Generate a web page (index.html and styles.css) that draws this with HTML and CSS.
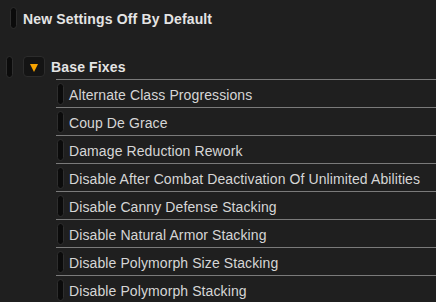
FILE: index.html
```html
<!DOCTYPE html>
<html>
<head>
<meta charset="utf-8">
<link rel="stylesheet" href="styles.css">
</head>
<body>
<div class="panel">
  <div class="header">
    <span class="pill"></span>
    <span class="title">New Settings Off By Default</span>
  </div>
  <div class="group">
    <div class="group-head">
      <span class="pill"></span>
      <span class="toggle"><svg width="8" height="8" viewBox="0 0 8 8"><polygon points="0,0 8,0 4,8" fill="#f7a300"/></svg></span>
      <span class="group-title">Base Fixes</span>
    </div>
    <div class="items">
      <div class="item"><span class="pill"></span><span class="label">Alternate Class Progressions</span></div>
      <div class="item"><span class="pill"></span><span class="label">Coup De Grace</span></div>
      <div class="item"><span class="pill"></span><span class="label">Damage Reduction Rework</span></div>
      <div class="item"><span class="pill"></span><span class="label">Disable After Combat Deactivation Of Unlimited Abilities</span></div>
      <div class="item"><span class="pill"></span><span class="label">Disable Canny Defense Stacking</span></div>
      <div class="item"><span class="pill"></span><span class="label">Disable Natural Armor Stacking</span></div>
      <div class="item"><span class="pill"></span><span class="label">Disable Polymorph Size Stacking</span></div>
      <div class="item"><span class="pill"></span><span class="label">Disable Polymorph Stacking</span></div>
    </div>
  </div>
</div>
</body>
</html>
```

FILE: styles.css
```css
html, body {
  margin: 0;
  padding: 0;
  background: #1f1f1f;
  height: 100%;
  overflow: hidden;
}
.panel {
  font-family: "Liberation Sans", Arial, sans-serif;
  color: #e4e4e4;
}
.pill {
  display: block;
  flex: none;
  width: 5px;
  height: 20px;
  border: 1px solid #2e2e2e;
  border-radius: 4px;
  background: #0b0b0b;
}
.header {
  display: flex;
  align-items: center;
  height: 22px;
  padding: 7px 0 0 10px;
  gap: 6px;
}
.title {
  font-weight: bold;
  font-size: 14px;
  letter-spacing: 0.15px;
  padding-top: 1px;
}
.group {
  margin-top: 27px;
}
.group-head {
  display: flex;
  align-items: center;
  height: 21px;
  padding-left: 6px;
}
.toggle {
  display: flex;
  align-items: center;
  justify-content: center;
  width: 20px;
  height: 19px;
  margin-left: 10px;
  border: 1px solid #2c2c2c;
  border-radius: 4px;
  background: #141414;
}
.toggle svg {
  margin-top: 3px;
}
.group-title {
  margin-left: 6px;
  font-weight: bold;
  font-size: 14px;
  letter-spacing: 0.15px;
  padding-top: 1px;
}
.items {
  margin: 2px 0 0 56px;
}
.item {
  display: flex;
  align-items: center;
  height: 27px;
  border-top: 1px solid #7a7a7a;
  padding-left: 1px;
}
.label {
  margin-left: 5px;
  font-size: 14px;
  letter-spacing: 0.1px;
  padding-top: 2px;
  color: #d6d6d6;
}
```
